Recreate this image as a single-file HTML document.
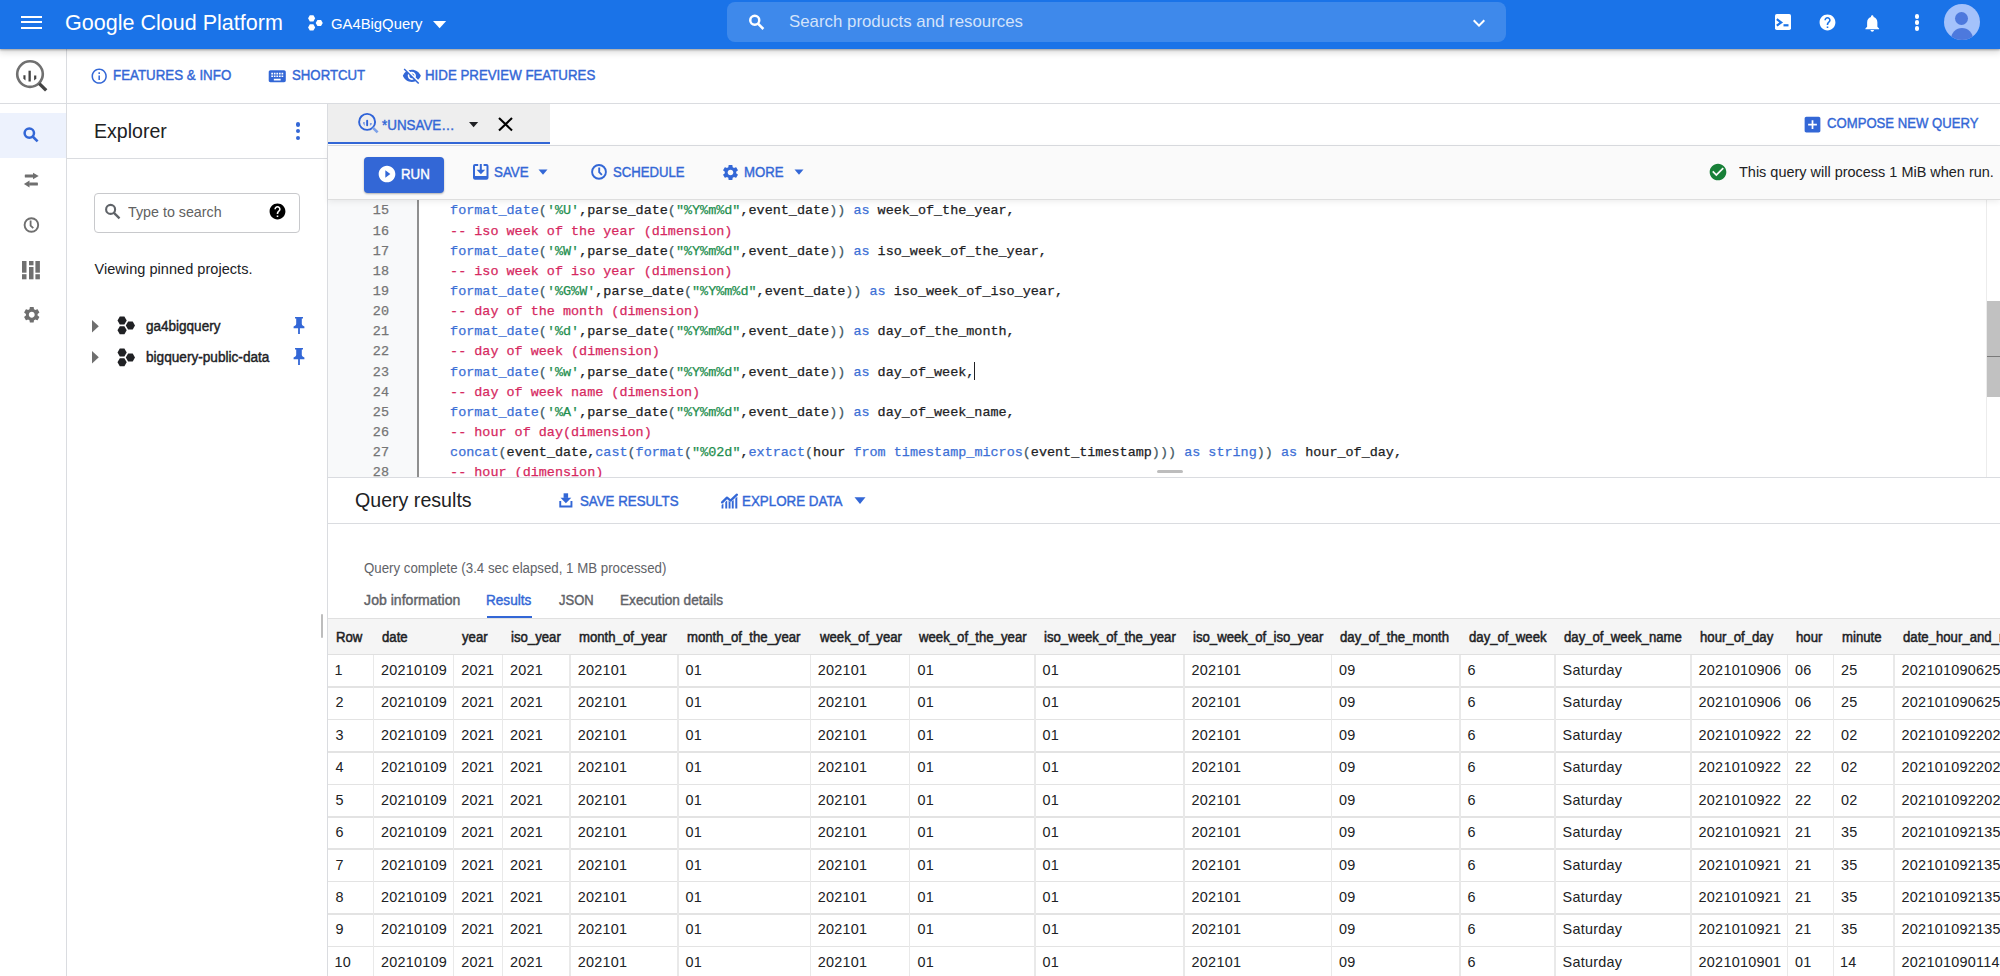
<!DOCTYPE html>
<html><head><meta charset="utf-8">
<style>
html,body{margin:0;padding:0;width:2000px;height:976px;overflow:hidden;background:#fff;}
body{font-family:"Liberation Sans",sans-serif;position:relative;}
.t{position:absolute;white-space:pre;line-height:1;z-index:10;transform-origin:0 0;}
.m{position:absolute;white-space:pre;line-height:1;font-family:"Liberation Mono",monospace;font-size:13.45px;-webkit-text-stroke:0.25px currentColor;}
.a{position:absolute;}
svg.a{overflow:visible;}
</style></head><body>

<!-- ============ HEADER ============ -->
<div class="a" style="left:0;top:0;width:2000px;height:49px;background:#1a73e8;box-shadow:0 1px 2px rgba(0,0,0,0.3),0 2px 7px 1px rgba(0,0,0,0.16);z-index:2;">
</div>
<div class="a" style="left:727px;top:2px;width:779px;height:40px;border-radius:8px;background:rgba(255,255,255,0.16);z-index:3;"></div>
<div class="a" style="z-index:4;left:0;top:0;width:2000px;height:49px;">
  <!-- hamburger -->
  <div class="a" style="left:21px;top:15.5px;width:20.5px;height:2px;background:#fff"></div>
  <div class="a" style="left:21px;top:21px;width:20.5px;height:2px;background:#fff"></div>
  <div class="a" style="left:21px;top:27px;width:20.5px;height:2px;background:#fff"></div>
  <!-- project icon -->
  <svg class="a" style="left:307.2px;top:14.3px" width="18.5" height="18.5" viewBox="0 0 17 17"><g fill="#fff"><polygon points="1,4 2.6,1.2 5.9,1.2 7.5,4 5.9,6.8 2.6,6.8"/><polygon points="1,12.3 2.6,9.5 5.9,9.5 7.5,12.3 5.9,15.1 2.6,15.1"/><polygon points="8,8.2 9.6,5.4 12.9,5.4 14.5,8.2 12.9,11 9.6,11"/></g></svg>
  <svg class="a" style="left:433.4px;top:20.9px" width="13.2" height="7.3" viewBox="0 0 13.2 7.3"><path fill="#fff" d="M0 0h13.2L6.6 7.3z"/></svg>
  <!-- search -->
  <svg class="a" style="left:745px;top:10px" width="22" height="22" viewBox="0 0 22 22"><circle cx="9.75" cy="10.25" r="4.5" fill="none" stroke="#fff" stroke-width="2.5"/><path d="M13 13.6 L18.4 19" stroke="#fff" stroke-width="2.5"/></svg>
  <svg class="a" style="left:1467px;top:11px" width="24" height="24" viewBox="0 0 24 24"><path fill="#fff" d="M16.59 8.59L12 13.17 7.41 8.59 6 10l6 6 6-6z"/></svg>
  <!-- right icons -->
  <svg class="a" style="left:1774.8px;top:14.3px" width="16" height="16" viewBox="0 0 16 16"><rect x="0" y="0" width="16" height="16" rx="1.8" fill="#fff"/><path d="M1.8 5.2 L6.2 8.4 L1.8 11.6" stroke="#1a73e8" stroke-width="2.2" fill="none"/><rect x="8.5" y="10.2" width="5" height="2.2" fill="#1a73e8"/></svg>
  <svg class="a" style="left:1817.9px;top:12.7px" width="19" height="19" viewBox="0 0 24 24"><path fill="#fff" d="M12 2C6.48 2 2 6.48 2 12s4.48 10 10 10 10-4.48 10-10S17.52 2 12 2zm1 17h-2v-2h2v2zm2.07-7.750l-.9.92C13.45 12.9 13 13.5 13 15h-2v-.5c0-1.1.45-2.1 1.17-2.83l1.24-1.26c.37-.36.59-.86.59-1.41 0-1.1-.9-2-2-2s-2 .9-2 2H8c0-2.21 1.790-4 4-4s4 1.79 4 4c0 .88-.36 1.68-.93 2.25z"/></svg>
  <svg class="a" style="left:1862px;top:12.8px" width="20.5" height="20.5" viewBox="0 0 24 24"><path fill="#fff" d="M12 22c1.1 0 2-.9 2-2h-4c0 1.1.89 2 2 2zm6-6v-5c0-3.07-1.64-5.64-4.5-6.32V4c0-.83-.67-1.5-1.5-1.5s-1.5.67-1.5 1.5v.68C7.63 5.36 6 7.920 6 11v5l-2 2v1h16v-1l-2-2z"/></svg>
  <div class="a" style="left:1914.6px;top:14.4px;width:4.8px;height:4.8px;border-radius:50%;background:#fff"></div><div class="a" style="left:1914.6px;top:20.1px;width:4.8px;height:4.8px;border-radius:50%;background:#fff"></div><div class="a" style="left:1914.6px;top:25.8px;width:4.8px;height:4.8px;border-radius:50%;background:#fff"></div>
  <!-- avatar -->
  <div class="a" style="left:1944px;top:4px;width:36px;height:36px;border-radius:50%;background:#a4c2fb;overflow:hidden;">
    <div class="a" style="left:11px;top:7.5px;width:13px;height:13px;border-radius:50%;background:#4d79dd;"></div>
    <div class="a" style="left:7px;top:23.5px;width:22px;height:20px;border-radius:11px 11px 0 0;background:#4d79dd;"></div>
  </div>
</div>

<!-- ============ SECOND BAR ============ -->
<div class="a" style="left:0;top:103px;width:2000px;height:1px;background:#dadce0;"></div>
<div class="a" style="left:66px;top:49px;width:1px;height:927px;background:#dadce0;"></div>
<!-- bq logo -->
<svg class="a" style="left:14px;top:58px" width="36" height="36" viewBox="0 0 36 36">
  <circle cx="16" cy="16.1" r="12.8" fill="none" stroke="#707070" stroke-width="2.6"/>
  <rect x="14.5" y="12.7" width="2.3" height="10.8" fill="#444"/>
  <path d="M9.4 17.3 h2.1 v5.2 c-.9-.5-1.6-1.2-2.1-2z" fill="#444"/>
  <path d="M20.1 17.5 h2.2 v3 c-.5.8-1.2 1.5-2.2 2z" fill="#444"/>
  <path d="M25.3 25.6 L32.2 32.4" stroke="#444" stroke-width="3.4"/>
</svg>
<svg class="a" style="left:90.3px;top:66.6px" width="18.4" height="18.4" viewBox="0 0 24 24"><path fill="#3367d6" d="M11 7h2v2h-2zm0 4h2v6h-2zm1-9C6.48 2 2 6.48 2 12s4.48 10 10 10 10-4.48 10-10S17.52 2 12 2zm0 18c-4.41 0-8-3.59-8-8s3.59-8 8-8 8 3.59 8 8-3.59 8-8 8z"/></svg>
<svg class="a" style="left:267.3px;top:65.8px" width="20.5" height="20.5" viewBox="0 0 24 24"><path fill="#3367d6" d="M20 5H4c-1.1 0-1.99.9-1.99 2L2 17c0 1.1.9 2 2 2h16c1.1 0 2-.9 2-2V7c0-1.1-.9-2-2-2zm-9 3h2v2h-2V8zm0 3h2v2h-2v-2zM8 8h2v2H8V8zm0 3h2v2H8v-2zm-1 2H5v-2h2v2zm0-3H5V8h2v2zm9 7H8v-2h8v2zm0-4h-2v-2h2v2zm0-3h-2V8h2v2zm3 3h-2v-2h2v2zm0-3h-2V8h2v2z"/></svg>
<svg class="a" style="left:402.4px;top:66.1px" width="19.7" height="19.7" viewBox="0 0 24 24"><path fill="#3367d6" d="M12 7c2.76 0 5 2.24 5 5 0 .65-.13 1.26-.36 1.830l2.92 2.92c1.51-1.26 2.7-2.89 3.43-4.75-1.73-4.39-6-7.5-11-7.5-1.4 0-2.74.25-3.98.7l2.16 2.16C10.74 7.13 11.35 7 12 7zM2 4.27l2.28 2.28.46.46C3.08 8.3 1.78 10.02 1 12c1.73 4.39 6 7.5 11 7.5 1.55 0 3.03-.3 4.38-.84l.42.42L19.73 22 21 20.73 3.27 3 2 4.27zM7.53 9.8l1.55 1.55c-.05.21-.08.43-.08.65 0 1.66 1.34 3 3 3 .22 0 .44-.03.65-.08l1.55 1.55c-.67.33-1.41.53-2.2.53-2.76 0-5-2.24-5-5 0-.79.2-1.53.53-2.2zm4.31-.78l3.15 3.15.02-.16c0-1.66-1.34-3-3-3l-.17.01z"/></svg>

<!-- ============ LEFT RAIL ============ -->
<div class="a" style="left:0;top:113px;width:66px;height:45px;background:#edf2fd;"></div>
<svg class="a" style="left:20px;top:124px" width="22" height="22" viewBox="0 0 22 22"><circle cx="9.3" cy="9.1" r="4.7" fill="none" stroke="#3367d6" stroke-width="2.5"/><path d="M12.4 12.3 L17.6 17.4" stroke="#3367d6" stroke-width="2.6" stroke-linecap="butt"/></svg>
<svg class="a" style="left:20px;top:170px" width="22" height="20" viewBox="0 0 22 20"><g fill="#6f6f6f"><rect x="4.8" y="4.5" width="8.6" height="3" rx="0.6"/><path d="M13 2.8 L18.7 6 L13 9.3z"/><path d="M3.9 14 L9.5 10.6 L9.5 17.5z"/><rect x="9.2" y="12.5" width="8.7" height="3" rx="0.6"/></g></svg>
<svg class="a" style="left:22px;top:216px" width="18" height="18" viewBox="0 0 18 18"><circle cx="9.4" cy="9.0" r="6.8" fill="none" stroke="#6f6f6f" stroke-width="1.9"/><path d="M8.6 4.6 V9.6 L11.3 12.2" stroke="#6f6f6f" stroke-width="1.8" fill="none"/></svg>
<svg class="a" style="left:22.2px;top:260.8px" width="18" height="18.5" viewBox="0 0 18 18.5"><g fill="#6f6f6f"><rect x="0" y="0" width="4.5" height="11.7"/><rect x="0" y="13.2" width="4.5" height="5.1"/><rect x="7" y="0" width="4.5" height="4.3"/><rect x="7" y="6" width="4.5" height="12.3"/><rect x="13.4" y="0" width="4.5" height="11.7"/><rect x="13.4" y="13.2" width="4.5" height="5.1"/></g></svg>
<svg class="a" style="left:21.6px;top:305px" width="19.5" height="19.5" viewBox="0 0 24 24"><path fill="#6f6f6f" d="M19.14 12.94c.04-.3.06-.61.06-.94 0-.32-.02-.64-.07-.94l2.03-1.58c.18-.14.23-.41.12-.61l-1.92-3.32c-.12-.22-.37-.29-.59-.22l-2.39.96c-.5-.38-1.030-.7-1.62-.94l-.36-2.54c-.04-.24-.24-.41-.48-.41h-3.84c-.24 0-.43.17-.47.41l-.36 2.54c-.59.24-1.13.57-1.62.94l-2.39-.96c-.22-.08-.47 0-.59.22L2.74 8.87c-.12.21-.08.47.12.61l2.03 1.58c-.05.3-.09.63-.09.94s.02.64.07.94l-2.03 1.58c-.18.14-.23.41-.12.61l1.92 3.32c.12.22.37.29.59.22l2.39-.96c.5.38 1.03.7 1.62.94l.36 2.54c.05.24.24.41.48.41h3.84c.24 0 .44-.17.47-.41l.36-2.54c.59-.24 1.13-.56 1.62-.94l2.39.96c.22.08.47 0 .59-.22l1.920-3.32c.12-.22.07-.47-.12-.61l-2.01-1.58zM12 15.6c-1.98 0-3.6-1.62-3.6-3.6s1.62-3.6 3.6-3.6 3.6 1.62 3.6 3.6-1.62 3.6-3.6 3.6z"/></svg>

<!-- ============ EXPLORER ============ -->
<div class="a" style="left:67px;top:158px;width:260px;height:1px;background:#dadce0;"></div>
<div class="a" style="left:327px;top:104px;width:1px;height:872px;background:#dadce0;"></div>
<div class="a" style="left:295.7px;top:122.2px;width:4.4px;height:4.4px;border-radius:50%;background:#3367d6;"></div>
<div class="a" style="left:295.7px;top:128.8px;width:4.4px;height:4.4px;border-radius:50%;background:#3367d6;"></div>
<div class="a" style="left:295.7px;top:135.5px;width:4.4px;height:4.4px;border-radius:50%;background:#3367d6;"></div>
<div class="a" style="left:94px;top:193px;width:204px;height:38px;border:1px solid #c8c9cc;border-radius:4px;"></div>
<svg class="a" style="left:100px;top:199px" width="22" height="22" viewBox="0 0 22 22"><circle cx="10.6" cy="10.4" r="4.5" fill="none" stroke="#5f6368" stroke-width="2.1"/><path d="M13.7 13.6 L19.5 19.4" stroke="#5f6368" stroke-width="2.3"/></svg>
<svg class="a" style="left:268px;top:202px" width="19" height="19" viewBox="0 0 24 24"><path fill="#000" d="M12 2C6.48 2 2 6.48 2 12s4.48 10 10 10 10-4.48 10-10S17.52 2 12 2zm1 17h-2v-2h2v2zm2.07-7.75l-.9.92C13.45 12.9 13 13.5 13 15h-2v-.5c0-1.1.45-2.1 1.17-2.83l1.24-1.26c.37-.36.59-.86.59-1.41 0-1.1-.9-2-2-2s-2 .9-2 2H8c0-2.21 1.79-4 4-4s4 1.79 4 4c0 .88-.36 1.68-.93 2.25z"/></svg>
<!-- tree rows -->
<svg class="a" style="left:91.7px;top:319.5px" width="7" height="12.5" viewBox="0 0 7 12.5"><path fill="#6f6f6f" d="M0 0 L6.8 6.25 L0 12.5z"/></svg>
<svg class="a" style="left:91.7px;top:350.9px" width="7" height="12.5" viewBox="0 0 7 12.5"><path fill="#6f6f6f" d="M0 0 L6.8 6.25 L0 12.5z"/></svg>
<svg class="a" style="left:117px;top:316px" width="19" height="19" viewBox="0 0 19 19" id="hex1"><g fill="#202124"><polygon points="0.5,4.6 2.8,0.6 7.4,0.6 9.7,4.6 7.4,8.6 2.8,8.6"/><polygon points="0.5,14.3 2.8,10.3 7.4,10.3 9.7,14.3 7.4,18.3 2.8,18.3"/><polygon points="8.8,9.4 11.1,5.4 15.7,5.4 18,9.4 15.7,13.4 11.1,13.4"/></g></svg>
<svg class="a" style="left:117px;top:347.5px" width="19" height="19" viewBox="0 0 19 19"><g fill="#202124"><polygon points="0.5,4.6 2.8,0.6 7.4,0.6 9.7,4.6 7.4,8.6 2.8,8.6"/><polygon points="0.5,14.3 2.8,10.3 7.4,10.3 9.7,14.3 7.4,18.3 2.8,18.3"/><polygon points="8.8,9.4 11.1,5.4 15.7,5.4 18,9.4 15.7,13.4 11.1,13.4"/></g></svg>
<svg class="a" style="left:293px;top:316.5px" width="12" height="17" viewBox="0 0 12 17"><path fill="#3367d6" d="M2 0h8v1.6H8.8v5.2c0 1.2 1.4 2.4 2.6 2.6v1.9H6.9v5.7L6 17l-.9-.1v-5.7H.6V9.4c1.2-.2 2.6-1.4 2.6-2.6V1.6H2z"/></svg>
<svg class="a" style="left:293px;top:348px" width="12" height="17" viewBox="0 0 12 17"><path fill="#3367d6" d="M2 0h8v1.6H8.8v5.2c0 1.2 1.4 2.4 2.6 2.6v1.9H6.9v5.7L6 17l-.9-.1v-5.7H.6V9.4c1.2-.2 2.6-1.4 2.6-2.6V1.6H2z"/></svg>

<!-- ============ TAB BAR ============ -->
<div class="a" style="left:328px;top:104px;width:221.5px;height:38px;background:#eeeeee;"></div>
<div class="a" style="left:328px;top:142px;width:221.5px;height:2.2px;background:#3367d6;"></div>
<div class="a" style="left:328px;top:144.5px;width:1672px;height:1px;background:#dadce0;"></div>
<svg class="a" style="left:357px;top:112px" width="22" height="22" viewBox="0 0 22 22">
  <circle cx="10.1" cy="9.9" r="8.0" fill="none" stroke="#2f63d8" stroke-width="1.9"/>
  <rect x="9.2" y="7.8" width="1.9" height="6.4" rx="0.9" fill="#2f63d8"/>
  <path d="M6.1 10h1.7v3.9c-.8-.7-1.4-1.6-1.7-2.6z" fill="#7b9be6"/>
  <path d="M12.9 11h1.9v1.2c-.4.6-1 1.2-1.9 1.5z" fill="#7b9be6"/>
  <path d="M15.8 15.6 L20.6 20.4" stroke="#7ea2e8" stroke-width="2.7"/>
</svg>
<svg class="a" style="left:469px;top:121.8px" width="9.2" height="5.2" viewBox="0 0 9 5"><path fill="#202124" d="M0 0h9L4.5 5z"/></svg>
<svg class="a" style="left:497.5px;top:116.8px" width="15" height="14.5" viewBox="0 0 15 14.5"><path d="M1 1 L14 13.5 M14 1 L1 13.5" stroke="#000" stroke-width="2.1"/></svg>
<svg class="a" style="left:1802px;top:113.5px" width="21" height="21" viewBox="0 0 24 24"><path fill="#3367d6" d="M19 3H5c-1.11 0-2 .9-2 2v14c0 1.1.89 2 2 2h14c1.1 0 2-.9 2-2V5c0-1.1-.9-2-2-2zm-2 10h-4v4h-2v-4H7v-2h4V7h2v4h4v2z"/></svg>

<!-- ============ TOOLBAR ============ -->
<div class="a" style="left:328px;top:145.5px;width:1672px;height:53px;background:#fafafa;border-bottom:1px solid #dedede;box-shadow:0 2px 6px rgba(0,0,0,0.07);z-index:1;"></div>
<div class="a" style="left:364px;top:157px;width:79.5px;height:35.5px;border-radius:4px;background:#3367d6;box-shadow:0 1px 2px rgba(0,0,0,0.3);z-index:2;"></div>
<svg class="a" style="left:377.4px;top:163.6px;z-index:3" width="20" height="20" viewBox="0 0 24 24"><path fill="#fff" d="M12 2C6.48 2 2 6.48 2 12s4.48 10 10 10 10-4.48 10-10S17.52 2 12 2zm-2 14.5v-9l6 4.5-6 4.5z"/></svg>
<svg class="a" style="left:472.5px;top:164.3px;z-index:2" width="15.5" height="15.7" viewBox="0 0 15.5 15.7"><path fill="#3367d6" d="M2 0H5.2V2H2V11.9H13.5V2H10.6V0H13.5Q15.5 0 15.5 2V13.7Q15.5 15.7 13.5 15.7H2Q0 15.7 0 13.7V2Q0 0 2 0z"/><rect x="6.8" y="0" width="2" height="6.2" fill="#3367d6"/><path fill="#3367d6" d="M3.6 5.7H12.2L7.9 10.2z"/></svg>
<svg class="a" style="left:537px;top:167px;z-index:2" width="12" height="10" viewBox="0 0 12 10"><path fill="#3367d6" d="M1.5 2.5h9L6 7.7z"/></svg>
<svg class="a" style="left:591px;top:164.4px;z-index:2" width="16" height="16" viewBox="0 0 16 16"><circle cx="8" cy="7.9" r="6.9" fill="none" stroke="#3367d6" stroke-width="1.9"/><path d="M8.2 3.6V8.2L10.9 10.9" stroke="#3367d6" stroke-width="1.9" fill="none"/></svg>
<svg class="a" style="left:720.7px;top:162.8px;z-index:2" width="19" height="19" viewBox="0 0 24 24"><path fill="#3367d6" d="M19.14 12.94c.04-.3.06-.61.06-.94 0-.32-.02-.64-.07-.94l2.03-1.58c.18-.14.23-.41.12-.61l-1.92-3.32c-.12-.22-.37-.29-.59-.22l-2.39.96c-.5-.38-1.03-.7-1.62-.94l-.36-2.54c-.04-.24-.24-.41-.48-.41h-3.840c-.24 0-.43.17-.47.41l-.36 2.54c-.59.24-1.13.57-1.62.94l-2.39-.96c-.22-.08-.47 0-.59.22L2.74 8.87c-.12.21-.08.47.12.61l2.03 1.58c-.05.3-.09.63-.09.94s.02.64.07.94l-2.03 1.58c-.18.14-.23.41-.12.61l1.92 3.32c.12.22.37.29.59.22l2.39-.96c.5.38 1.03.7 1.62.94l.36 2.54c.05.24.24.41.48.41h3.84c.24 0 .44-.17.47-.41l.36-2.54c.59-.24 1.13-.56 1.62-.94l2.39.96c.22.08.47 0 .59-.22l1.92-3.32c.12-.22.07-.47-.12-.61l-2.01-1.58zM12 15.6c-1.98 0-3.6-1.62-3.6-3.6s1.62-3.6 3.6-3.6 3.6 1.62 3.6 3.6-1.62 3.6-3.6 3.6z"/></svg>
<svg class="a" style="left:792.5px;top:167px;z-index:2" width="12" height="10" viewBox="0 0 12 10"><path fill="#3367d6" d="M1.5 2.5h9L6 7.7z"/></svg>
<svg class="a" style="left:1707.5px;top:162.3px;z-index:2" width="20" height="20" viewBox="0 0 24 24"><path fill="#188038" d="M12 2C6.48 2 2 6.48 2 12s4.48 10 10 10 10-4.48 10-10S17.52 2 12 2zm-2 15l-5-5 1.41-1.41L10 14.17l7.59-7.59L19 8l-9 9z"/></svg>

<!-- ============ EDITOR ============ -->
<div class="a" style="left:328px;top:199px;width:90px;height:278px;background:#f8f9fa;"></div>
<div class="a" style="left:417.3px;top:199px;width:1.5px;height:278px;background:#8f8f8f;"></div>
<div class="a" style="left:1986px;top:199px;width:1px;height:278px;background:#ececec;"></div>
<div class="a" style="left:1987px;top:301.3px;width:13px;height:95.3px;background:#c1c1c1;"></div>
<div class="a" style="left:1987px;top:355.5px;width:13px;height:1.2px;background:#7a7a7a;"></div>
<div class="a" style="left:1157px;top:470px;width:26px;height:3px;border-radius:2px;background:#bdbdbd;"></div>
<div class="a" style="left:328px;top:477px;width:1672px;height:1px;background:#dadce0;"></div>
<!-- caret -->
<div class="a" style="left:973.5px;top:362px;width:1.4px;height:18px;background:#202124;"></div>

<div class="a" style="left:0;top:0;width:2000px;height:477px;clip-path:inset(199px 0 0 0);z-index:5"><div class="m" style="left:300px;width:89px;text-align:right;top:204.38px;color:#757575;">15</div>
<div class="m" style="left:450.10px;top:204.38px;color:#202124;"><span style="color:#3c6fd6">format_date</span><span style="color:#455a64">(</span><span style="color:#1e8e4e">&#x27;%U&#x27;</span>,parse_date<span style="color:#455a64">(</span><span style="color:#1e8e4e">&quot;%Y%m%d&quot;</span>,event_date<span style="color:#455a64">)</span><span style="color:#455a64">)</span> <span style="color:#3c6fd6">as</span> week_of_the_year,</div>
<div class="m" style="left:300px;width:89px;text-align:right;top:224.53px;color:#757575;">16</div>
<div class="m" style="left:450.10px;top:224.53px;color:#202124;"><span style="color:#d6285f">-- iso week of the year (dimension)</span></div>
<div class="m" style="left:300px;width:89px;text-align:right;top:244.68px;color:#757575;">17</div>
<div class="m" style="left:450.10px;top:244.68px;color:#202124;"><span style="color:#3c6fd6">format_date</span><span style="color:#455a64">(</span><span style="color:#1e8e4e">&#x27;%W&#x27;</span>,parse_date<span style="color:#455a64">(</span><span style="color:#1e8e4e">&quot;%Y%m%d&quot;</span>,event_date<span style="color:#455a64">)</span><span style="color:#455a64">)</span> <span style="color:#3c6fd6">as</span> iso_week_of_the_year,</div>
<div class="m" style="left:300px;width:89px;text-align:right;top:264.83px;color:#757575;">18</div>
<div class="m" style="left:450.10px;top:264.83px;color:#202124;"><span style="color:#d6285f">-- iso week of iso year (dimension)</span></div>
<div class="m" style="left:300px;width:89px;text-align:right;top:284.98px;color:#757575;">19</div>
<div class="m" style="left:450.10px;top:284.98px;color:#202124;"><span style="color:#3c6fd6">format_date</span><span style="color:#455a64">(</span><span style="color:#1e8e4e">&#x27;%G%W&#x27;</span>,parse_date<span style="color:#455a64">(</span><span style="color:#1e8e4e">&quot;%Y%m%d&quot;</span>,event_date<span style="color:#455a64">)</span><span style="color:#455a64">)</span> <span style="color:#3c6fd6">as</span> iso_week_of_iso_year,</div>
<div class="m" style="left:300px;width:89px;text-align:right;top:305.13px;color:#757575;">20</div>
<div class="m" style="left:450.10px;top:305.13px;color:#202124;"><span style="color:#d6285f">-- day of the month (dimension)</span></div>
<div class="m" style="left:300px;width:89px;text-align:right;top:325.28px;color:#757575;">21</div>
<div class="m" style="left:450.10px;top:325.28px;color:#202124;"><span style="color:#3c6fd6">format_date</span><span style="color:#455a64">(</span><span style="color:#1e8e4e">&#x27;%d&#x27;</span>,parse_date<span style="color:#455a64">(</span><span style="color:#1e8e4e">&quot;%Y%m%d&quot;</span>,event_date<span style="color:#455a64">)</span><span style="color:#455a64">)</span> <span style="color:#3c6fd6">as</span> day_of_the_month,</div>
<div class="m" style="left:300px;width:89px;text-align:right;top:345.43px;color:#757575;">22</div>
<div class="m" style="left:450.10px;top:345.43px;color:#202124;"><span style="color:#d6285f">-- day of week (dimension)</span></div>
<div class="m" style="left:300px;width:89px;text-align:right;top:365.58px;color:#757575;">23</div>
<div class="m" style="left:450.10px;top:365.58px;color:#202124;"><span style="color:#3c6fd6">format_date</span><span style="color:#455a64">(</span><span style="color:#1e8e4e">&#x27;%w&#x27;</span>,parse_date<span style="color:#455a64">(</span><span style="color:#1e8e4e">&quot;%Y%m%d&quot;</span>,event_date<span style="color:#455a64">)</span><span style="color:#455a64">)</span> <span style="color:#3c6fd6">as</span> day_of_week,</div>
<div class="m" style="left:300px;width:89px;text-align:right;top:385.73px;color:#757575;">24</div>
<div class="m" style="left:450.10px;top:385.73px;color:#202124;"><span style="color:#d6285f">-- day of week name (dimension)</span></div>
<div class="m" style="left:300px;width:89px;text-align:right;top:405.88px;color:#757575;">25</div>
<div class="m" style="left:450.10px;top:405.88px;color:#202124;"><span style="color:#3c6fd6">format_date</span><span style="color:#455a64">(</span><span style="color:#1e8e4e">&#x27;%A&#x27;</span>,parse_date<span style="color:#455a64">(</span><span style="color:#1e8e4e">&quot;%Y%m%d&quot;</span>,event_date<span style="color:#455a64">)</span><span style="color:#455a64">)</span> <span style="color:#3c6fd6">as</span> day_of_week_name,</div>
<div class="m" style="left:300px;width:89px;text-align:right;top:426.03px;color:#757575;">26</div>
<div class="m" style="left:450.10px;top:426.03px;color:#202124;"><span style="color:#d6285f">-- hour of day(dimension)</span></div>
<div class="m" style="left:300px;width:89px;text-align:right;top:446.18px;color:#757575;">27</div>
<div class="m" style="left:450.10px;top:446.18px;color:#202124;"><span style="color:#3c6fd6">concat</span><span style="color:#455a64">(</span>event_date,<span style="color:#3c6fd6">cast</span><span style="color:#455a64">(</span><span style="color:#3c6fd6">format</span><span style="color:#455a64">(</span><span style="color:#1e8e4e">&quot;%02d&quot;</span>,<span style="color:#3c6fd6">extract</span><span style="color:#455a64">(</span>hour <span style="color:#3c6fd6">from</span> <span style="color:#3c6fd6">timestamp_micros</span><span style="color:#455a64">(</span>event_timestamp<span style="color:#455a64">)</span><span style="color:#455a64">)</span><span style="color:#455a64">)</span> <span style="color:#3c6fd6">as</span> <span style="color:#3c6fd6">string</span><span style="color:#455a64">)</span><span style="color:#455a64">)</span> <span style="color:#3c6fd6">as</span> hour_of_day,</div>
<div class="m" style="left:300px;width:89px;text-align:right;top:466.33px;color:#757575;">28</div>
<div class="m" style="left:450.10px;top:466.33px;color:#202124;"><span style="color:#d6285f">-- hour (dimension)</span></div></div>

<!-- ============ RESULTS ============ -->
<div class="a" style="left:328px;top:523px;width:1672px;height:1px;background:#dadce0;"></div>
<svg class="a" style="left:558.6px;top:492.5px" width="14" height="15" viewBox="0 0 14 15"><g fill="#3367d6"><rect x="4.6" y="0.3" width="4.5" height="4.6"/><path d="M1.5 4.7H12.3L6.9 10.2z"/><path d="M0.3 8H2.2V12.5H11.5V8H13.4V14.4H0.3z"/></g></svg>
<svg class="a" style="left:720.5px;top:492.5px" width="17" height="16" viewBox="0 0 17 16"><g fill="#3367d6"><path d="M0.6 12 L2.4 10.4 V15.6 H0.6z"/><path d="M4.3 8.9 L6.2 7.4 V15.6 H4.3z"/><path d="M7.6 7.8 L9.5 9.3 V15.6 H7.6z"/><path d="M10.8 8.6 L12.7 6.9 V15.6 H10.8z"/><path d="M14.3 5.5 L16.3 3.7 V15.6 H14.3z"/></g><path d="M1.1 9.4 L6 4.6 L9.6 7.6 L15.9 1.7" stroke="#3367d6" stroke-width="2.3" fill="none" stroke-linecap="round" stroke-linejoin="round"/></svg>
<svg class="a" style="left:853px;top:495px" width="14" height="12" viewBox="0 0 14 12"><path fill="#3367d6" d="M1.5 2.3h11L7 9z"/></svg>
<div class="a" style="left:487px;top:615.7px;width:45px;height:2.6px;background:#3367d6;"></div>
<div class="a" style="left:320.5px;top:614px;width:2.5px;height:23.5px;border-radius:1px;background:#bdbdbd;"></div>

<div style="position:absolute;left:327px;top:618px;width:1673px;height:35px;background:#f5f5f5;border-top:1px solid #e0e0e0;border-bottom:1px solid #e0e0e0;"></div>
<div style="position:absolute;left:327px;top:686.0px;width:1673px;height:1.6px;background:#e3e3e3;"></div>
<div style="position:absolute;left:327px;top:718.5px;width:1673px;height:1.6px;background:#e3e3e3;"></div>
<div style="position:absolute;left:327px;top:751.0px;width:1673px;height:1.6px;background:#e3e3e3;"></div>
<div style="position:absolute;left:327px;top:783.5px;width:1673px;height:1.6px;background:#e3e3e3;"></div>
<div style="position:absolute;left:327px;top:816.0px;width:1673px;height:1.6px;background:#e3e3e3;"></div>
<div style="position:absolute;left:327px;top:848.4px;width:1673px;height:1.6px;background:#e3e3e3;"></div>
<div style="position:absolute;left:327px;top:880.9px;width:1673px;height:1.6px;background:#e3e3e3;"></div>
<div style="position:absolute;left:327px;top:913.4px;width:1673px;height:1.6px;background:#e3e3e3;"></div>
<div style="position:absolute;left:327px;top:945.9px;width:1673px;height:1.6px;background:#e3e3e3;"></div>
<div style="position:absolute;left:327px;top:978.4px;width:1673px;height:1.6px;background:#e3e3e3;"></div>
<div style="position:absolute;left:372.6px;top:655px;width:1.4px;height:330px;background:#e9e9e9;"></div>
<div style="position:absolute;left:453.0px;top:655px;width:1.4px;height:330px;background:#e9e9e9;"></div>
<div style="position:absolute;left:501.7px;top:655px;width:1.4px;height:330px;background:#e9e9e9;"></div>
<div style="position:absolute;left:569.4px;top:655px;width:1.4px;height:330px;background:#e9e9e9;"></div>
<div style="position:absolute;left:677.3px;top:655px;width:1.4px;height:330px;background:#e9e9e9;"></div>
<div style="position:absolute;left:809.5px;top:655px;width:1.4px;height:330px;background:#e9e9e9;"></div>
<div style="position:absolute;left:909.1px;top:655px;width:1.4px;height:330px;background:#e9e9e9;"></div>
<div style="position:absolute;left:1034.3px;top:655px;width:1.4px;height:330px;background:#e9e9e9;"></div>
<div style="position:absolute;left:1183.3px;top:655px;width:1.4px;height:330px;background:#e9e9e9;"></div>
<div style="position:absolute;left:1330.8px;top:655px;width:1.4px;height:330px;background:#e9e9e9;"></div>
<div style="position:absolute;left:1459.3px;top:655px;width:1.4px;height:330px;background:#e9e9e9;"></div>
<div style="position:absolute;left:1554.3px;top:655px;width:1.4px;height:330px;background:#e9e9e9;"></div>
<div style="position:absolute;left:1690.3px;top:655px;width:1.4px;height:330px;background:#e9e9e9;"></div>
<div style="position:absolute;left:1786.8px;top:655px;width:1.4px;height:330px;background:#e9e9e9;"></div>
<div style="position:absolute;left:1832.8px;top:655px;width:1.4px;height:330px;background:#e9e9e9;"></div>
<div style="position:absolute;left:1893.3px;top:655px;width:1.4px;height:330px;background:#e9e9e9;"></div>
<div style="position:absolute;left:327px;top:618px;width:1px;height:360px;background:#dadce0;"></div>

<div class="t" style="left:65.42px;top:11.50px;font-size:22px;color:#fff;transform:scaleX(0.9790);">Google Cloud Platform</div>
<div class="t" style="left:330.80px;top:16.25px;font-size:15px;color:#fff;transform:scaleX(0.9888);">GA4BigQuery</div>
<div class="t" style="left:788.80px;top:12.75px;font-size:17px;color:rgba(255,255,255,0.78);transform:scaleX(0.9905);">Search products and resources</div>
<div class="t" style="left:113.05px;top:68.10px;font-size:14px;color:#3367d6;-webkit-text-stroke:0.42px #3367d6;transform:scaleX(0.9521);">FEATURES &amp; INFO</div>
<div class="t" style="left:291.80px;top:68.10px;font-size:14px;color:#3367d6;-webkit-text-stroke:0.42px #3367d6;transform:scaleX(0.9440);">SHORTCUT</div>
<div class="t" style="left:425.05px;top:68.10px;font-size:14px;color:#3367d6;-webkit-text-stroke:0.42px #3367d6;transform:scaleX(0.9489);">HIDE PREVIEW FEATURES</div>
<div class="t" style="left:93.95px;top:120.58px;font-size:20.5px;color:#202124;transform:scaleX(0.9535);">Explorer</div>
<div class="t" style="left:128.10px;top:204.15px;font-size:15px;color:#616161;transform:scaleX(0.9516);">Type to search</div>
<div class="t" style="left:94.50px;top:261.68px;font-size:14.5px;color:#202124;letter-spacing:0.048px;">Viewing pinned projects.</div>
<div class="t" style="left:145.80px;top:318.70px;font-size:14px;color:#202124;-webkit-text-stroke:0.42px #202124;transform:scaleX(0.9655);">ga4bigquery</div>
<div class="t" style="left:145.80px;top:349.50px;font-size:14px;color:#202124;-webkit-text-stroke:0.42px #202124;transform:scaleX(0.9727);">bigquery-public-data</div>
<div class="t" style="left:381.70px;top:117.77px;font-size:14.5px;color:#3367d6;-webkit-text-stroke:0.42px #3367d6;transform:scaleX(0.9236);">*UNSAVE…</div>
<div class="t" style="left:1827.40px;top:116.17px;font-size:14.5px;color:#3367d6;-webkit-text-stroke:0.42px #3367d6;transform:scaleX(0.9055);">COMPOSE NEW QUERY</div>
<div class="t" style="left:400.58px;top:166.98px;font-size:14.5px;color:#fff;-webkit-text-stroke:0.42px #fff;transform:scaleX(0.9184);">RUN</div>
<div class="t" style="left:494.40px;top:164.98px;font-size:14.5px;color:#3367d6;-webkit-text-stroke:0.42px #3367d6;transform:scaleX(0.9226);">SAVE</div>
<div class="t" style="left:613.30px;top:164.98px;font-size:14.5px;color:#3367d6;-webkit-text-stroke:0.42px #3367d6;transform:scaleX(0.9055);">SCHEDULE</div>
<div class="t" style="left:744.39px;top:164.98px;font-size:14.5px;color:#3367d6;-webkit-text-stroke:0.42px #3367d6;transform:scaleX(0.9106);">MORE</div>
<div class="t" style="left:1738.70px;top:164.05px;font-size:15px;color:#202124;transform:scaleX(0.9643);">This query will process 1 MiB when run.</div>
<div class="t" style="left:355.40px;top:489.77px;font-size:20.5px;color:#202124;transform:scaleX(0.9569);">Query results</div>
<div class="t" style="left:579.70px;top:493.70px;font-size:14px;color:#3367d6;-webkit-text-stroke:0.42px #3367d6;transform:scaleX(0.9497);">SAVE RESULTS</div>
<div class="t" style="left:741.75px;top:493.70px;font-size:14px;color:#3367d6;-webkit-text-stroke:0.42px #3367d6;transform:scaleX(0.9547);">EXPLORE DATA</div>
<div class="t" style="left:364.10px;top:561.20px;font-size:14px;color:#5f6368;transform:scaleX(0.9479);">Query complete (3.4 sec elapsed, 1 MB processed)</div>
<div class="t" style="left:364.10px;top:593.10px;font-size:14px;color:#5f6368;-webkit-text-stroke:0.42px #5f6368;letter-spacing:0.034px;">Job information</div>
<div class="t" style="left:486.03px;top:593.10px;font-size:14px;color:#3367d6;-webkit-text-stroke:0.42px #3367d6;transform:scaleX(0.9697);">Results</div>
<div class="t" style="left:558.70px;top:593.10px;font-size:14px;color:#5f6368;-webkit-text-stroke:0.42px #5f6368;transform:scaleX(0.9275);">JSON</div>
<div class="t" style="left:619.53px;top:593.10px;font-size:14px;color:#5f6368;-webkit-text-stroke:0.42px #5f6368;transform:scaleX(0.9729);">Execution details</div>
<div class="t" style="left:336.46px;top:629.70px;font-size:14px;color:#202124;-webkit-text-stroke:0.5px #202124;transform:scaleX(0.9405);">Row</div>
<div class="t" style="left:381.90px;top:629.70px;font-size:14px;color:#202124;-webkit-text-stroke:0.5px #202124;transform:scaleX(0.9405);">date</div>
<div class="t" style="left:462.30px;top:629.70px;font-size:14px;color:#202124;-webkit-text-stroke:0.5px #202124;transform:scaleX(0.9405);">year</div>
<div class="t" style="left:511.00px;top:629.70px;font-size:14px;color:#202124;-webkit-text-stroke:0.5px #202124;transform:scaleX(0.9405);">iso_year</div>
<div class="t" style="left:578.70px;top:629.70px;font-size:14px;color:#202124;-webkit-text-stroke:0.5px #202124;transform:scaleX(0.9405);">month_of_year</div>
<div class="t" style="left:686.60px;top:629.70px;font-size:14px;color:#202124;-webkit-text-stroke:0.5px #202124;transform:scaleX(0.9405);">month_of_the_year</div>
<div class="t" style="left:819.74px;top:629.70px;font-size:14px;color:#202124;-webkit-text-stroke:0.5px #202124;transform:scaleX(0.9405);">week_of_year</div>
<div class="t" style="left:919.34px;top:629.70px;font-size:14px;color:#202124;-webkit-text-stroke:0.5px #202124;transform:scaleX(0.9405);">week_of_the_year</div>
<div class="t" style="left:1043.60px;top:629.70px;font-size:14px;color:#202124;-webkit-text-stroke:0.5px #202124;transform:scaleX(0.9405);">iso_week_of_the_year</div>
<div class="t" style="left:1192.60px;top:629.70px;font-size:14px;color:#202124;-webkit-text-stroke:0.5px #202124;transform:scaleX(0.9405);">iso_week_of_iso_year</div>
<div class="t" style="left:1340.10px;top:629.70px;font-size:14px;color:#202124;-webkit-text-stroke:0.5px #202124;transform:scaleX(0.9405);">day_of_the_month</div>
<div class="t" style="left:1468.60px;top:629.70px;font-size:14px;color:#202124;-webkit-text-stroke:0.5px #202124;transform:scaleX(0.9405);">day_of_week</div>
<div class="t" style="left:1563.60px;top:629.70px;font-size:14px;color:#202124;-webkit-text-stroke:0.5px #202124;transform:scaleX(0.9405);">day_of_week_name</div>
<div class="t" style="left:1699.60px;top:629.70px;font-size:14px;color:#202124;-webkit-text-stroke:0.5px #202124;transform:scaleX(0.9405);">hour_of_day</div>
<div class="t" style="left:1796.10px;top:629.70px;font-size:14px;color:#202124;-webkit-text-stroke:0.5px #202124;transform:scaleX(0.9405);">hour</div>
<div class="t" style="left:1842.10px;top:629.70px;font-size:14px;color:#202124;-webkit-text-stroke:0.5px #202124;transform:scaleX(0.9405);">minute</div>
<div class="t" style="left:1902.60px;top:629.70px;font-size:14px;color:#202124;-webkit-text-stroke:0.5px #202124;transform:scaleX(0.9405);">date_hour_and_minute</div>
<div class="t" style="left:334.40px;top:662.56px;font-size:14.4px;color:#202124;">1</div>
<div class="t" style="left:380.90px;top:662.56px;font-size:14.4px;color:#202124;letter-spacing:0.260px;">20210109</div>
<div class="t" style="left:461.30px;top:662.56px;font-size:14.4px;color:#202124;letter-spacing:0.260px;">2021</div>
<div class="t" style="left:510.00px;top:662.56px;font-size:14.4px;color:#202124;letter-spacing:0.260px;">2021</div>
<div class="t" style="left:577.70px;top:662.56px;font-size:14.4px;color:#202124;letter-spacing:0.260px;">202101</div>
<div class="t" style="left:685.60px;top:662.56px;font-size:14.4px;color:#202124;letter-spacing:0.260px;">01</div>
<div class="t" style="left:817.80px;top:662.56px;font-size:14.4px;color:#202124;letter-spacing:0.260px;">202101</div>
<div class="t" style="left:917.40px;top:662.56px;font-size:14.4px;color:#202124;letter-spacing:0.260px;">01</div>
<div class="t" style="left:1042.60px;top:662.56px;font-size:14.4px;color:#202124;letter-spacing:0.260px;">01</div>
<div class="t" style="left:1191.60px;top:662.56px;font-size:14.4px;color:#202124;letter-spacing:0.260px;">202101</div>
<div class="t" style="left:1339.10px;top:662.56px;font-size:14.4px;color:#202124;letter-spacing:0.260px;">09</div>
<div class="t" style="left:1467.60px;top:662.56px;font-size:14.4px;color:#202124;">6</div>
<div class="t" style="left:1562.60px;top:662.56px;font-size:14.4px;color:#202124;letter-spacing:0.260px;">Saturday</div>
<div class="t" style="left:1698.60px;top:662.56px;font-size:14.4px;color:#202124;letter-spacing:0.260px;">2021010906</div>
<div class="t" style="left:1795.10px;top:662.56px;font-size:14.4px;color:#202124;letter-spacing:0.260px;">06</div>
<div class="t" style="left:1841.10px;top:662.56px;font-size:14.4px;color:#202124;letter-spacing:0.260px;">25</div>
<div class="t" style="left:1901.60px;top:662.56px;font-size:14.4px;color:#202124;letter-spacing:0.260px;">202101090625</div>
<div class="t" style="left:335.40px;top:695.05px;font-size:14.4px;color:#202124;">2</div>
<div class="t" style="left:380.90px;top:695.05px;font-size:14.4px;color:#202124;letter-spacing:0.260px;">20210109</div>
<div class="t" style="left:461.30px;top:695.05px;font-size:14.4px;color:#202124;letter-spacing:0.260px;">2021</div>
<div class="t" style="left:510.00px;top:695.05px;font-size:14.4px;color:#202124;letter-spacing:0.260px;">2021</div>
<div class="t" style="left:577.70px;top:695.05px;font-size:14.4px;color:#202124;letter-spacing:0.260px;">202101</div>
<div class="t" style="left:685.60px;top:695.05px;font-size:14.4px;color:#202124;letter-spacing:0.260px;">01</div>
<div class="t" style="left:817.80px;top:695.05px;font-size:14.4px;color:#202124;letter-spacing:0.260px;">202101</div>
<div class="t" style="left:917.40px;top:695.05px;font-size:14.4px;color:#202124;letter-spacing:0.260px;">01</div>
<div class="t" style="left:1042.60px;top:695.05px;font-size:14.4px;color:#202124;letter-spacing:0.260px;">01</div>
<div class="t" style="left:1191.60px;top:695.05px;font-size:14.4px;color:#202124;letter-spacing:0.260px;">202101</div>
<div class="t" style="left:1339.10px;top:695.05px;font-size:14.4px;color:#202124;letter-spacing:0.260px;">09</div>
<div class="t" style="left:1467.60px;top:695.05px;font-size:14.4px;color:#202124;">6</div>
<div class="t" style="left:1562.60px;top:695.05px;font-size:14.4px;color:#202124;letter-spacing:0.260px;">Saturday</div>
<div class="t" style="left:1698.60px;top:695.05px;font-size:14.4px;color:#202124;letter-spacing:0.260px;">2021010906</div>
<div class="t" style="left:1795.10px;top:695.05px;font-size:14.4px;color:#202124;letter-spacing:0.260px;">06</div>
<div class="t" style="left:1841.10px;top:695.05px;font-size:14.4px;color:#202124;letter-spacing:0.260px;">25</div>
<div class="t" style="left:1901.60px;top:695.05px;font-size:14.4px;color:#202124;letter-spacing:0.260px;">202101090625</div>
<div class="t" style="left:335.40px;top:727.54px;font-size:14.4px;color:#202124;">3</div>
<div class="t" style="left:380.90px;top:727.54px;font-size:14.4px;color:#202124;letter-spacing:0.260px;">20210109</div>
<div class="t" style="left:461.30px;top:727.54px;font-size:14.4px;color:#202124;letter-spacing:0.260px;">2021</div>
<div class="t" style="left:510.00px;top:727.54px;font-size:14.4px;color:#202124;letter-spacing:0.260px;">2021</div>
<div class="t" style="left:577.70px;top:727.54px;font-size:14.4px;color:#202124;letter-spacing:0.260px;">202101</div>
<div class="t" style="left:685.60px;top:727.54px;font-size:14.4px;color:#202124;letter-spacing:0.260px;">01</div>
<div class="t" style="left:817.80px;top:727.54px;font-size:14.4px;color:#202124;letter-spacing:0.260px;">202101</div>
<div class="t" style="left:917.40px;top:727.54px;font-size:14.4px;color:#202124;letter-spacing:0.260px;">01</div>
<div class="t" style="left:1042.60px;top:727.54px;font-size:14.4px;color:#202124;letter-spacing:0.260px;">01</div>
<div class="t" style="left:1191.60px;top:727.54px;font-size:14.4px;color:#202124;letter-spacing:0.260px;">202101</div>
<div class="t" style="left:1339.10px;top:727.54px;font-size:14.4px;color:#202124;letter-spacing:0.260px;">09</div>
<div class="t" style="left:1467.60px;top:727.54px;font-size:14.4px;color:#202124;">6</div>
<div class="t" style="left:1562.60px;top:727.54px;font-size:14.4px;color:#202124;letter-spacing:0.260px;">Saturday</div>
<div class="t" style="left:1698.60px;top:727.54px;font-size:14.4px;color:#202124;letter-spacing:0.260px;">2021010922</div>
<div class="t" style="left:1795.10px;top:727.54px;font-size:14.4px;color:#202124;letter-spacing:0.260px;">22</div>
<div class="t" style="left:1841.10px;top:727.54px;font-size:14.4px;color:#202124;letter-spacing:0.260px;">02</div>
<div class="t" style="left:1901.60px;top:727.54px;font-size:14.4px;color:#202124;letter-spacing:0.260px;">202101092202</div>
<div class="t" style="left:335.40px;top:760.03px;font-size:14.4px;color:#202124;">4</div>
<div class="t" style="left:380.90px;top:760.03px;font-size:14.4px;color:#202124;letter-spacing:0.260px;">20210109</div>
<div class="t" style="left:461.30px;top:760.03px;font-size:14.4px;color:#202124;letter-spacing:0.260px;">2021</div>
<div class="t" style="left:510.00px;top:760.03px;font-size:14.4px;color:#202124;letter-spacing:0.260px;">2021</div>
<div class="t" style="left:577.70px;top:760.03px;font-size:14.4px;color:#202124;letter-spacing:0.260px;">202101</div>
<div class="t" style="left:685.60px;top:760.03px;font-size:14.4px;color:#202124;letter-spacing:0.260px;">01</div>
<div class="t" style="left:817.80px;top:760.03px;font-size:14.4px;color:#202124;letter-spacing:0.260px;">202101</div>
<div class="t" style="left:917.40px;top:760.03px;font-size:14.4px;color:#202124;letter-spacing:0.260px;">01</div>
<div class="t" style="left:1042.60px;top:760.03px;font-size:14.4px;color:#202124;letter-spacing:0.260px;">01</div>
<div class="t" style="left:1191.60px;top:760.03px;font-size:14.4px;color:#202124;letter-spacing:0.260px;">202101</div>
<div class="t" style="left:1339.10px;top:760.03px;font-size:14.4px;color:#202124;letter-spacing:0.260px;">09</div>
<div class="t" style="left:1467.60px;top:760.03px;font-size:14.4px;color:#202124;">6</div>
<div class="t" style="left:1562.60px;top:760.03px;font-size:14.4px;color:#202124;letter-spacing:0.260px;">Saturday</div>
<div class="t" style="left:1698.60px;top:760.03px;font-size:14.4px;color:#202124;letter-spacing:0.260px;">2021010922</div>
<div class="t" style="left:1795.10px;top:760.03px;font-size:14.4px;color:#202124;letter-spacing:0.260px;">22</div>
<div class="t" style="left:1841.10px;top:760.03px;font-size:14.4px;color:#202124;letter-spacing:0.260px;">02</div>
<div class="t" style="left:1901.60px;top:760.03px;font-size:14.4px;color:#202124;letter-spacing:0.260px;">202101092202</div>
<div class="t" style="left:335.40px;top:792.52px;font-size:14.4px;color:#202124;">5</div>
<div class="t" style="left:380.90px;top:792.52px;font-size:14.4px;color:#202124;letter-spacing:0.260px;">20210109</div>
<div class="t" style="left:461.30px;top:792.52px;font-size:14.4px;color:#202124;letter-spacing:0.260px;">2021</div>
<div class="t" style="left:510.00px;top:792.52px;font-size:14.4px;color:#202124;letter-spacing:0.260px;">2021</div>
<div class="t" style="left:577.70px;top:792.52px;font-size:14.4px;color:#202124;letter-spacing:0.260px;">202101</div>
<div class="t" style="left:685.60px;top:792.52px;font-size:14.4px;color:#202124;letter-spacing:0.260px;">01</div>
<div class="t" style="left:817.80px;top:792.52px;font-size:14.4px;color:#202124;letter-spacing:0.260px;">202101</div>
<div class="t" style="left:917.40px;top:792.52px;font-size:14.4px;color:#202124;letter-spacing:0.260px;">01</div>
<div class="t" style="left:1042.60px;top:792.52px;font-size:14.4px;color:#202124;letter-spacing:0.260px;">01</div>
<div class="t" style="left:1191.60px;top:792.52px;font-size:14.4px;color:#202124;letter-spacing:0.260px;">202101</div>
<div class="t" style="left:1339.10px;top:792.52px;font-size:14.4px;color:#202124;letter-spacing:0.260px;">09</div>
<div class="t" style="left:1467.60px;top:792.52px;font-size:14.4px;color:#202124;">6</div>
<div class="t" style="left:1562.60px;top:792.52px;font-size:14.4px;color:#202124;letter-spacing:0.260px;">Saturday</div>
<div class="t" style="left:1698.60px;top:792.52px;font-size:14.4px;color:#202124;letter-spacing:0.260px;">2021010922</div>
<div class="t" style="left:1795.10px;top:792.52px;font-size:14.4px;color:#202124;letter-spacing:0.260px;">22</div>
<div class="t" style="left:1841.10px;top:792.52px;font-size:14.4px;color:#202124;letter-spacing:0.260px;">02</div>
<div class="t" style="left:1901.60px;top:792.52px;font-size:14.4px;color:#202124;letter-spacing:0.260px;">202101092202</div>
<div class="t" style="left:335.40px;top:825.01px;font-size:14.4px;color:#202124;">6</div>
<div class="t" style="left:380.90px;top:825.01px;font-size:14.4px;color:#202124;letter-spacing:0.260px;">20210109</div>
<div class="t" style="left:461.30px;top:825.01px;font-size:14.4px;color:#202124;letter-spacing:0.260px;">2021</div>
<div class="t" style="left:510.00px;top:825.01px;font-size:14.4px;color:#202124;letter-spacing:0.260px;">2021</div>
<div class="t" style="left:577.70px;top:825.01px;font-size:14.4px;color:#202124;letter-spacing:0.260px;">202101</div>
<div class="t" style="left:685.60px;top:825.01px;font-size:14.4px;color:#202124;letter-spacing:0.260px;">01</div>
<div class="t" style="left:817.80px;top:825.01px;font-size:14.4px;color:#202124;letter-spacing:0.260px;">202101</div>
<div class="t" style="left:917.40px;top:825.01px;font-size:14.4px;color:#202124;letter-spacing:0.260px;">01</div>
<div class="t" style="left:1042.60px;top:825.01px;font-size:14.4px;color:#202124;letter-spacing:0.260px;">01</div>
<div class="t" style="left:1191.60px;top:825.01px;font-size:14.4px;color:#202124;letter-spacing:0.260px;">202101</div>
<div class="t" style="left:1339.10px;top:825.01px;font-size:14.4px;color:#202124;letter-spacing:0.260px;">09</div>
<div class="t" style="left:1467.60px;top:825.01px;font-size:14.4px;color:#202124;">6</div>
<div class="t" style="left:1562.60px;top:825.01px;font-size:14.4px;color:#202124;letter-spacing:0.260px;">Saturday</div>
<div class="t" style="left:1698.60px;top:825.01px;font-size:14.4px;color:#202124;letter-spacing:0.260px;">2021010921</div>
<div class="t" style="left:1795.10px;top:825.01px;font-size:14.4px;color:#202124;letter-spacing:0.260px;">21</div>
<div class="t" style="left:1841.10px;top:825.01px;font-size:14.4px;color:#202124;letter-spacing:0.260px;">35</div>
<div class="t" style="left:1901.60px;top:825.01px;font-size:14.4px;color:#202124;letter-spacing:0.260px;">202101092135</div>
<div class="t" style="left:335.40px;top:857.50px;font-size:14.4px;color:#202124;">7</div>
<div class="t" style="left:380.90px;top:857.50px;font-size:14.4px;color:#202124;letter-spacing:0.260px;">20210109</div>
<div class="t" style="left:461.30px;top:857.50px;font-size:14.4px;color:#202124;letter-spacing:0.260px;">2021</div>
<div class="t" style="left:510.00px;top:857.50px;font-size:14.4px;color:#202124;letter-spacing:0.260px;">2021</div>
<div class="t" style="left:577.70px;top:857.50px;font-size:14.4px;color:#202124;letter-spacing:0.260px;">202101</div>
<div class="t" style="left:685.60px;top:857.50px;font-size:14.4px;color:#202124;letter-spacing:0.260px;">01</div>
<div class="t" style="left:817.80px;top:857.50px;font-size:14.4px;color:#202124;letter-spacing:0.260px;">202101</div>
<div class="t" style="left:917.40px;top:857.50px;font-size:14.4px;color:#202124;letter-spacing:0.260px;">01</div>
<div class="t" style="left:1042.60px;top:857.50px;font-size:14.4px;color:#202124;letter-spacing:0.260px;">01</div>
<div class="t" style="left:1191.60px;top:857.50px;font-size:14.4px;color:#202124;letter-spacing:0.260px;">202101</div>
<div class="t" style="left:1339.10px;top:857.50px;font-size:14.4px;color:#202124;letter-spacing:0.260px;">09</div>
<div class="t" style="left:1467.60px;top:857.50px;font-size:14.4px;color:#202124;">6</div>
<div class="t" style="left:1562.60px;top:857.50px;font-size:14.4px;color:#202124;letter-spacing:0.260px;">Saturday</div>
<div class="t" style="left:1698.60px;top:857.50px;font-size:14.4px;color:#202124;letter-spacing:0.260px;">2021010921</div>
<div class="t" style="left:1795.10px;top:857.50px;font-size:14.4px;color:#202124;letter-spacing:0.260px;">21</div>
<div class="t" style="left:1841.10px;top:857.50px;font-size:14.4px;color:#202124;letter-spacing:0.260px;">35</div>
<div class="t" style="left:1901.60px;top:857.50px;font-size:14.4px;color:#202124;letter-spacing:0.260px;">202101092135</div>
<div class="t" style="left:335.40px;top:889.99px;font-size:14.4px;color:#202124;">8</div>
<div class="t" style="left:380.90px;top:889.99px;font-size:14.4px;color:#202124;letter-spacing:0.260px;">20210109</div>
<div class="t" style="left:461.30px;top:889.99px;font-size:14.4px;color:#202124;letter-spacing:0.260px;">2021</div>
<div class="t" style="left:510.00px;top:889.99px;font-size:14.4px;color:#202124;letter-spacing:0.260px;">2021</div>
<div class="t" style="left:577.70px;top:889.99px;font-size:14.4px;color:#202124;letter-spacing:0.260px;">202101</div>
<div class="t" style="left:685.60px;top:889.99px;font-size:14.4px;color:#202124;letter-spacing:0.260px;">01</div>
<div class="t" style="left:817.80px;top:889.99px;font-size:14.4px;color:#202124;letter-spacing:0.260px;">202101</div>
<div class="t" style="left:917.40px;top:889.99px;font-size:14.4px;color:#202124;letter-spacing:0.260px;">01</div>
<div class="t" style="left:1042.60px;top:889.99px;font-size:14.4px;color:#202124;letter-spacing:0.260px;">01</div>
<div class="t" style="left:1191.60px;top:889.99px;font-size:14.4px;color:#202124;letter-spacing:0.260px;">202101</div>
<div class="t" style="left:1339.10px;top:889.99px;font-size:14.4px;color:#202124;letter-spacing:0.260px;">09</div>
<div class="t" style="left:1467.60px;top:889.99px;font-size:14.4px;color:#202124;">6</div>
<div class="t" style="left:1562.60px;top:889.99px;font-size:14.4px;color:#202124;letter-spacing:0.260px;">Saturday</div>
<div class="t" style="left:1698.60px;top:889.99px;font-size:14.4px;color:#202124;letter-spacing:0.260px;">2021010921</div>
<div class="t" style="left:1795.10px;top:889.99px;font-size:14.4px;color:#202124;letter-spacing:0.260px;">21</div>
<div class="t" style="left:1841.10px;top:889.99px;font-size:14.4px;color:#202124;letter-spacing:0.260px;">35</div>
<div class="t" style="left:1901.60px;top:889.99px;font-size:14.4px;color:#202124;letter-spacing:0.260px;">202101092135</div>
<div class="t" style="left:335.40px;top:922.48px;font-size:14.4px;color:#202124;">9</div>
<div class="t" style="left:380.90px;top:922.48px;font-size:14.4px;color:#202124;letter-spacing:0.260px;">20210109</div>
<div class="t" style="left:461.30px;top:922.48px;font-size:14.4px;color:#202124;letter-spacing:0.260px;">2021</div>
<div class="t" style="left:510.00px;top:922.48px;font-size:14.4px;color:#202124;letter-spacing:0.260px;">2021</div>
<div class="t" style="left:577.70px;top:922.48px;font-size:14.4px;color:#202124;letter-spacing:0.260px;">202101</div>
<div class="t" style="left:685.60px;top:922.48px;font-size:14.4px;color:#202124;letter-spacing:0.260px;">01</div>
<div class="t" style="left:817.80px;top:922.48px;font-size:14.4px;color:#202124;letter-spacing:0.260px;">202101</div>
<div class="t" style="left:917.40px;top:922.48px;font-size:14.4px;color:#202124;letter-spacing:0.260px;">01</div>
<div class="t" style="left:1042.60px;top:922.48px;font-size:14.4px;color:#202124;letter-spacing:0.260px;">01</div>
<div class="t" style="left:1191.60px;top:922.48px;font-size:14.4px;color:#202124;letter-spacing:0.260px;">202101</div>
<div class="t" style="left:1339.10px;top:922.48px;font-size:14.4px;color:#202124;letter-spacing:0.260px;">09</div>
<div class="t" style="left:1467.60px;top:922.48px;font-size:14.4px;color:#202124;">6</div>
<div class="t" style="left:1562.60px;top:922.48px;font-size:14.4px;color:#202124;letter-spacing:0.260px;">Saturday</div>
<div class="t" style="left:1698.60px;top:922.48px;font-size:14.4px;color:#202124;letter-spacing:0.260px;">2021010921</div>
<div class="t" style="left:1795.10px;top:922.48px;font-size:14.4px;color:#202124;letter-spacing:0.260px;">21</div>
<div class="t" style="left:1841.10px;top:922.48px;font-size:14.4px;color:#202124;letter-spacing:0.260px;">35</div>
<div class="t" style="left:1901.60px;top:922.48px;font-size:14.4px;color:#202124;letter-spacing:0.260px;">202101092135</div>
<div class="t" style="left:334.40px;top:954.97px;font-size:14.4px;color:#202124;letter-spacing:0.260px;">10</div>
<div class="t" style="left:380.90px;top:954.97px;font-size:14.4px;color:#202124;letter-spacing:0.260px;">20210109</div>
<div class="t" style="left:461.30px;top:954.97px;font-size:14.4px;color:#202124;letter-spacing:0.260px;">2021</div>
<div class="t" style="left:510.00px;top:954.97px;font-size:14.4px;color:#202124;letter-spacing:0.260px;">2021</div>
<div class="t" style="left:577.70px;top:954.97px;font-size:14.4px;color:#202124;letter-spacing:0.260px;">202101</div>
<div class="t" style="left:685.60px;top:954.97px;font-size:14.4px;color:#202124;letter-spacing:0.260px;">01</div>
<div class="t" style="left:817.80px;top:954.97px;font-size:14.4px;color:#202124;letter-spacing:0.260px;">202101</div>
<div class="t" style="left:917.40px;top:954.97px;font-size:14.4px;color:#202124;letter-spacing:0.260px;">01</div>
<div class="t" style="left:1042.60px;top:954.97px;font-size:14.4px;color:#202124;letter-spacing:0.260px;">01</div>
<div class="t" style="left:1191.60px;top:954.97px;font-size:14.4px;color:#202124;letter-spacing:0.260px;">202101</div>
<div class="t" style="left:1339.10px;top:954.97px;font-size:14.4px;color:#202124;letter-spacing:0.260px;">09</div>
<div class="t" style="left:1467.60px;top:954.97px;font-size:14.4px;color:#202124;">6</div>
<div class="t" style="left:1562.60px;top:954.97px;font-size:14.4px;color:#202124;letter-spacing:0.260px;">Saturday</div>
<div class="t" style="left:1698.60px;top:954.97px;font-size:14.4px;color:#202124;letter-spacing:0.260px;">2021010901</div>
<div class="t" style="left:1795.10px;top:954.97px;font-size:14.4px;color:#202124;letter-spacing:0.260px;">01</div>
<div class="t" style="left:1840.10px;top:954.97px;font-size:14.4px;color:#202124;letter-spacing:0.260px;">14</div>
<div class="t" style="left:1901.60px;top:954.97px;font-size:14.4px;color:#202124;letter-spacing:0.260px;">202101090114</div>

</body></html>
